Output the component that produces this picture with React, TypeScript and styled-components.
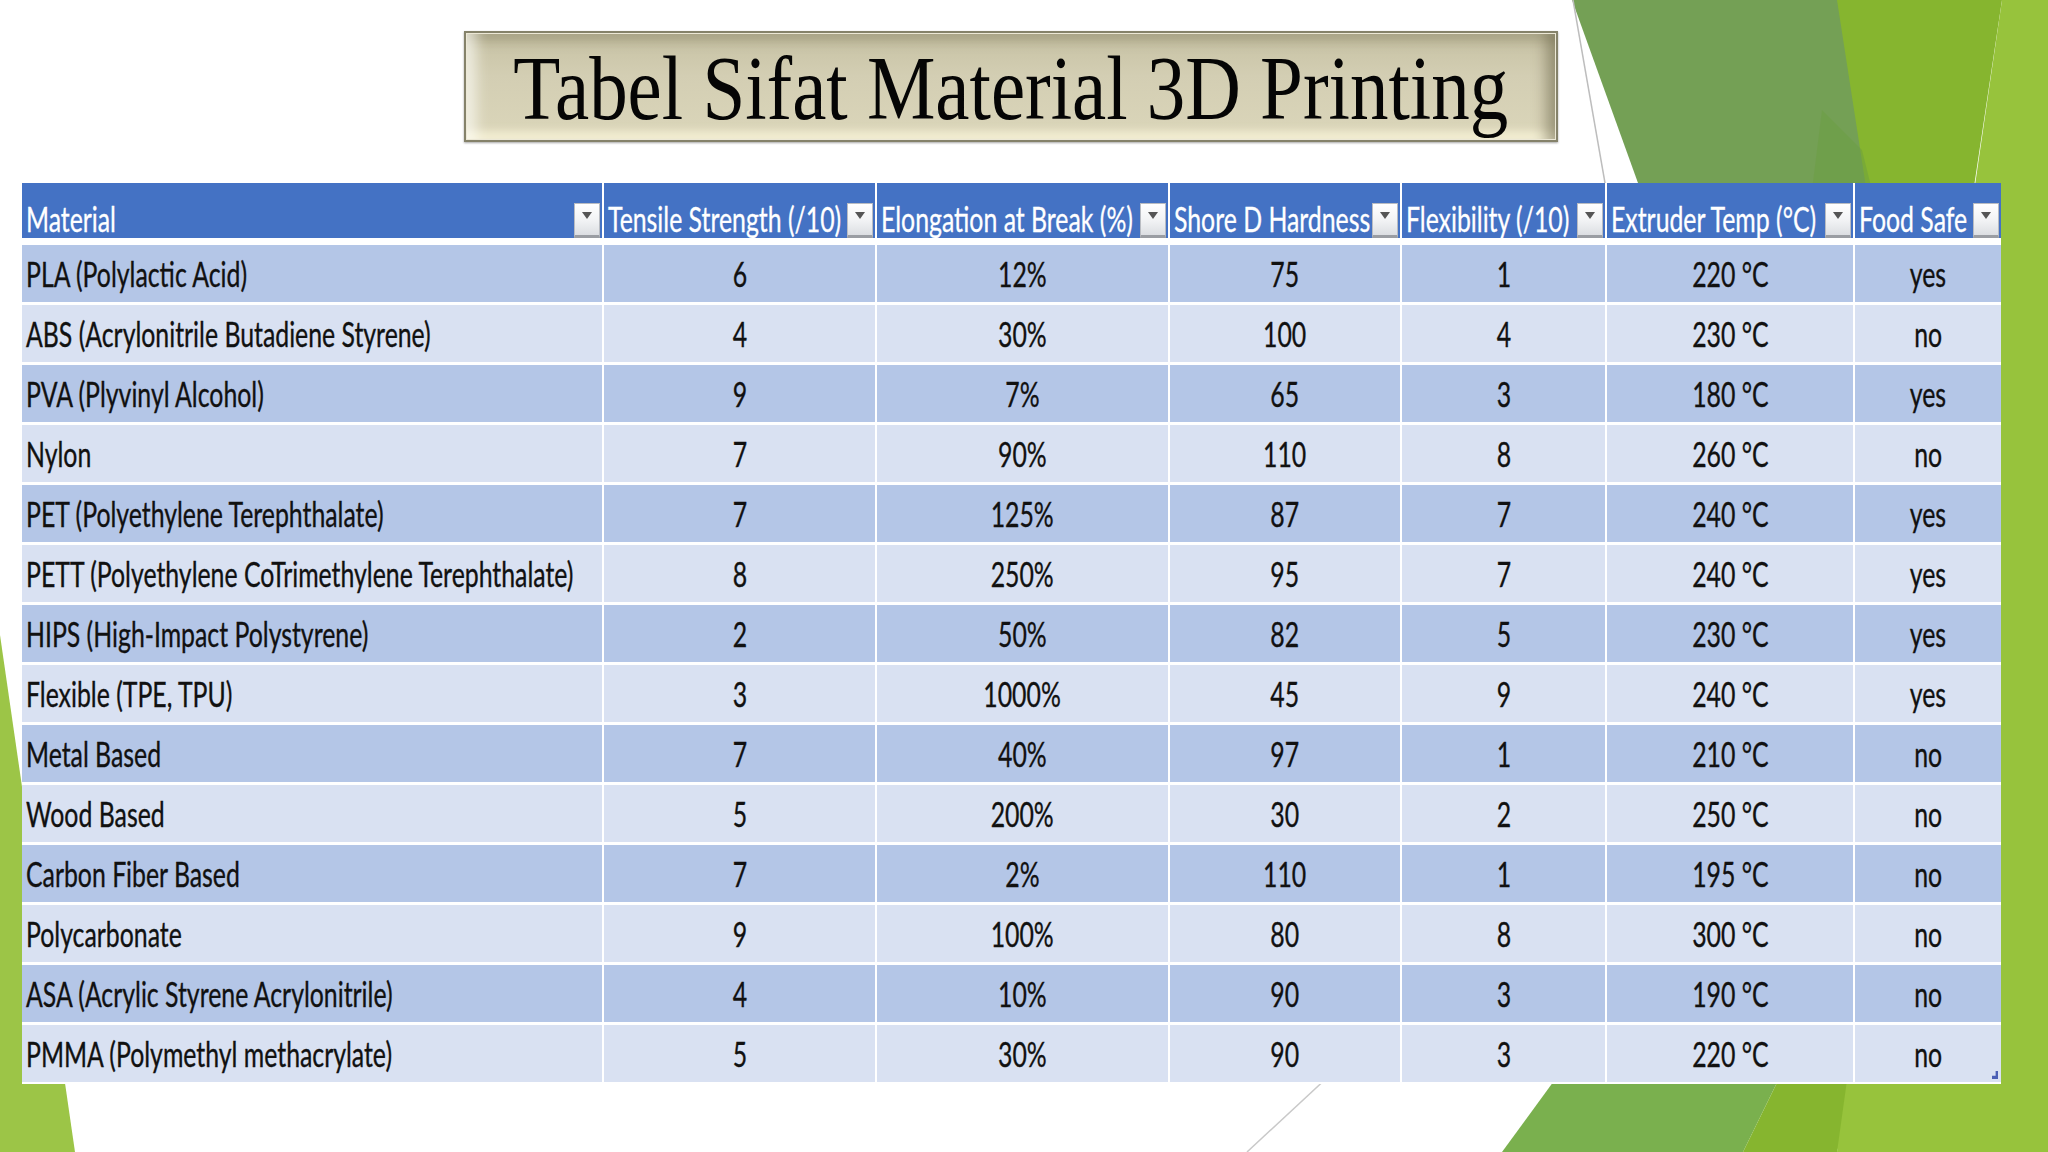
import React from 'react';
import styled, { createGlobalStyle } from 'styled-components';

const GlobalStyle = createGlobalStyle`
  html, body {
    margin: 0;
    padding: 0;
    background: #ffffff;
  }
  body {
    width: 2048px;
    height: 1152px;
    overflow: hidden;
  }
`;

// the slide text is squeezed horizontally, like a stretched 4:3 slide
const SQUEEZE = 0.73;

const columns = [580, 271, 291, 230, 203, 246, 146];

const headers = [
  'Material',
  'Tensile Strength (/10)',
  'Elongation at Break (%)',
  'Shore D Hardness',
  'Flexibility (/10)',
  'Extruder Temp (°C)',
  'Food Safe',
];

const rows = [
  ['PLA (Polylactic Acid)', '6', '12%', '75', '1', '220 °C', 'yes'],
  ['ABS (Acrylonitrile Butadiene Styrene)', '4', '30%', '100', '4', '230 °C', 'no'],
  ['PVA (Plyvinyl Alcohol)', '9', '7%', '65', '3', '180 °C', 'yes'],
  ['Nylon', '7', '90%', '110', '8', '260 °C', 'no'],
  ['PET (Polyethylene Terephthalate)', '7', '125%', '87', '7', '240 °C', 'yes'],
  ['PETT (Polyethylene CoTrimethylene Terephthalate)', '8', '250%', '95', '7', '240 °C', 'yes'],
  ['HIPS (High-Impact Polystyrene)', '2', '50%', '82', '5', '230 °C', 'yes'],
  ['Flexible (TPE, TPU)', '3', '1000%', '45', '9', '240 °C', 'yes'],
  ['Metal Based', '7', '40%', '97', '1', '210 °C', 'no'],
  ['Wood Based', '5', '200%', '30', '2', '250 °C', 'no'],
  ['Carbon Fiber Based', '7', '2%', '110', '1', '195 °C', 'no'],
  ['Polycarbonate', '9', '100%', '80', '8', '300 °C', 'no'],
  ['ASA (Acrylic Styrene Acrylonitrile)', '4', '10%', '90', '3', '190 °C', 'no'],
  ['PMMA (Polymethyl methacrylate)', '5', '30%', '90', '3', '220 °C', 'no'],
];

const Slide = styled.div`
  position: relative;
  width: 2048px;
  height: 1152px;
  overflow: hidden;
  background: #ffffff;
`;

const Backdrop = styled.svg`
  position: absolute;
  left: 0;
  top: 0;
  width: 2048px;
  height: 1152px;
  z-index: 0;
`;

const Content = styled.div`
  position: relative;
  z-index: 1;
  display: flex;
  flex-direction: column;
  align-items: flex-start;
  padding-top: 31px;
`;

const TitleBox = styled.div`
  box-sizing: border-box;
  margin-left: 464px;
  width: 1094px;
  height: 111px;
  padding-top: 4px;
  display: flex;
  align-items: center;
  justify-content: center;
  border: 2px solid #85826a;
  background: linear-gradient(180deg, #c6c1a3 0%, #d3ceb3 40%, #dbd6ba 100%);
  box-shadow:
    inset 0 0 0 1px #ece8d6,
    inset 18px 0 14px -8px rgba(255, 255, 250, 0.65),
    inset -18px 0 14px -8px rgba(95, 90, 62, 0.5),
    inset 0 -16px 10px -8px rgba(255, 250, 222, 0.8),
    inset 0 16px 12px -8px rgba(120, 115, 85, 0.4),
    0 1px 2px rgba(0, 0, 0, 0.35);
`;

const TitleText = styled.h1`
  margin: 0;
  display: inline-block;
  font-family: 'Liberation Serif', 'Times New Roman', serif;
  font-weight: 400;
  font-size: 90px;
  line-height: 1;
  color: #050505;
  white-space: nowrap;
  transform: scaleX(0.855);
`;

const Table = styled.div`
  position: relative;
  margin-top: 41px;
  margin-left: 22px;
  display: grid;
  grid-template-columns: ${columns.map((c) => `${c}px`).join(' ')};
  column-gap: 2px;
  row-gap: 3px;
  padding-bottom: 2px;
  background: #ffffff;
  font-family: Lato, 'Open Sans', sans-serif;
`;

const HeadCell = styled.div`
  height: 55px;
  margin-bottom: 4px;
  display: flex;
  align-items: flex-end;
  padding-left: 4px;
  background: #4472c4;
  color: #ffffff;
  font-size: 34px;
  line-height: 1;
  overflow: hidden;
`;

const HeadLabel = styled.div`
  flex: 1;
  min-width: 0;
  padding-bottom: 2px;
  white-space: nowrap;
  -webkit-text-stroke: 0.3px #ffffff;
`;

const FilterButton = styled.div`
  flex: none;
  position: relative;
  width: 26px;
  height: 35px;
  margin-right: 2px;
  box-sizing: border-box;
  border: 1px solid #b9bcc2;
  border-bottom: 3px solid #9a9da3;
  background: linear-gradient(180deg, #ffffff 0%, #f1f2f4 55%, #dcdee2 100%);

  &::after {
    content: '';
    position: absolute;
    left: 50%;
    top: 8px;
    transform: translateX(-50%);
    border-left: 5px solid transparent;
    border-right: 5px solid transparent;
    border-top: 7px solid #555555;
  }
`;

const Cell = styled.div<{ $alt: boolean; $left?: boolean }>`
  height: 57px;
  display: flex;
  align-items: center;
  justify-content: ${(p) => (p.$left ? 'flex-start' : 'center')};
  padding-left: ${(p) => (p.$left ? '4px' : '0')};
  background: ${(p) => (p.$alt ? '#d9e1f2' : '#b4c6e7')};
  color: #111111;
  font-size: 34px;
  line-height: 1;
  white-space: nowrap;
  -webkit-text-stroke: 0.35px #111111;
`;

const Squeeze = styled.span<{ $left?: boolean }>`
  display: inline-block;
  transform: scaleX(${SQUEEZE});
  transform-origin: ${(p) => (p.$left ? 'left' : 'center')} center;
`;

const ResizeMark = styled.div`
  position: absolute;
  right: 3px;
  bottom: 5px;
  width: 6px;
  height: 8px;
  background: #4b5fb5;
  clip-path: polygon(60% 0, 100% 0, 100% 100%, 0 100%, 0 60%, 60% 60%);
`;

const Background = () => (
  <Backdrop viewBox="0 0 2048 1152">
    <polygon points="0,635 75,1152 0,1152" fill="#9cc547" />
    <polygon points="1572,0 1845,0 1950,729 1827,707" fill="#74a055" />
    <polygon points="1827,707 1950,729 1743,1152 1502,1152" fill="#7ab04e" />
    <polygon points="1837,0 2002,0 1975,180 1900,700 1950,729 1837,1152 1743,1152 1950,729" fill="#86b52f" />
    <polygon points="2002,0 2048,0 2048,1152 1837,1152 1900,700" fill="#97c33c" />
    <polygon points="1822,110 1862,150 1872,190 1812,190" fill="#6b9e41" opacity="0.45" />
    <line x1="1573" y1="0" x2="1640" y2="383" stroke="#bdbdbd" strokeWidth="1.5" />
    <line x1="1247" y1="1152" x2="1400" y2="1010" stroke="#c9c9c9" strokeWidth="1.5" />
  </Backdrop>
);

const App = () => {
  return (
    <Slide>
      <GlobalStyle />
      <Background />
      <Content>
        <TitleBox>
          <TitleText>Tabel Sifat Material 3D Printing</TitleText>
        </TitleBox>
        <Table>
          {headers.map((h) => (
            <HeadCell key={h}>
              <HeadLabel>
                <Squeeze $left>{h}</Squeeze>
              </HeadLabel>
              <FilterButton />
            </HeadCell>
          ))}
          {rows.map((row, i) =>
            row.map((value, j) => (
              <Cell key={`${i}-${j}`} $alt={i % 2 === 1} $left={j === 0}>
                <Squeeze $left={j === 0}>{value}</Squeeze>
              </Cell>
            ))
          )}
          <ResizeMark />
        </Table>
      </Content>
    </Slide>
  );
};

export default App;
